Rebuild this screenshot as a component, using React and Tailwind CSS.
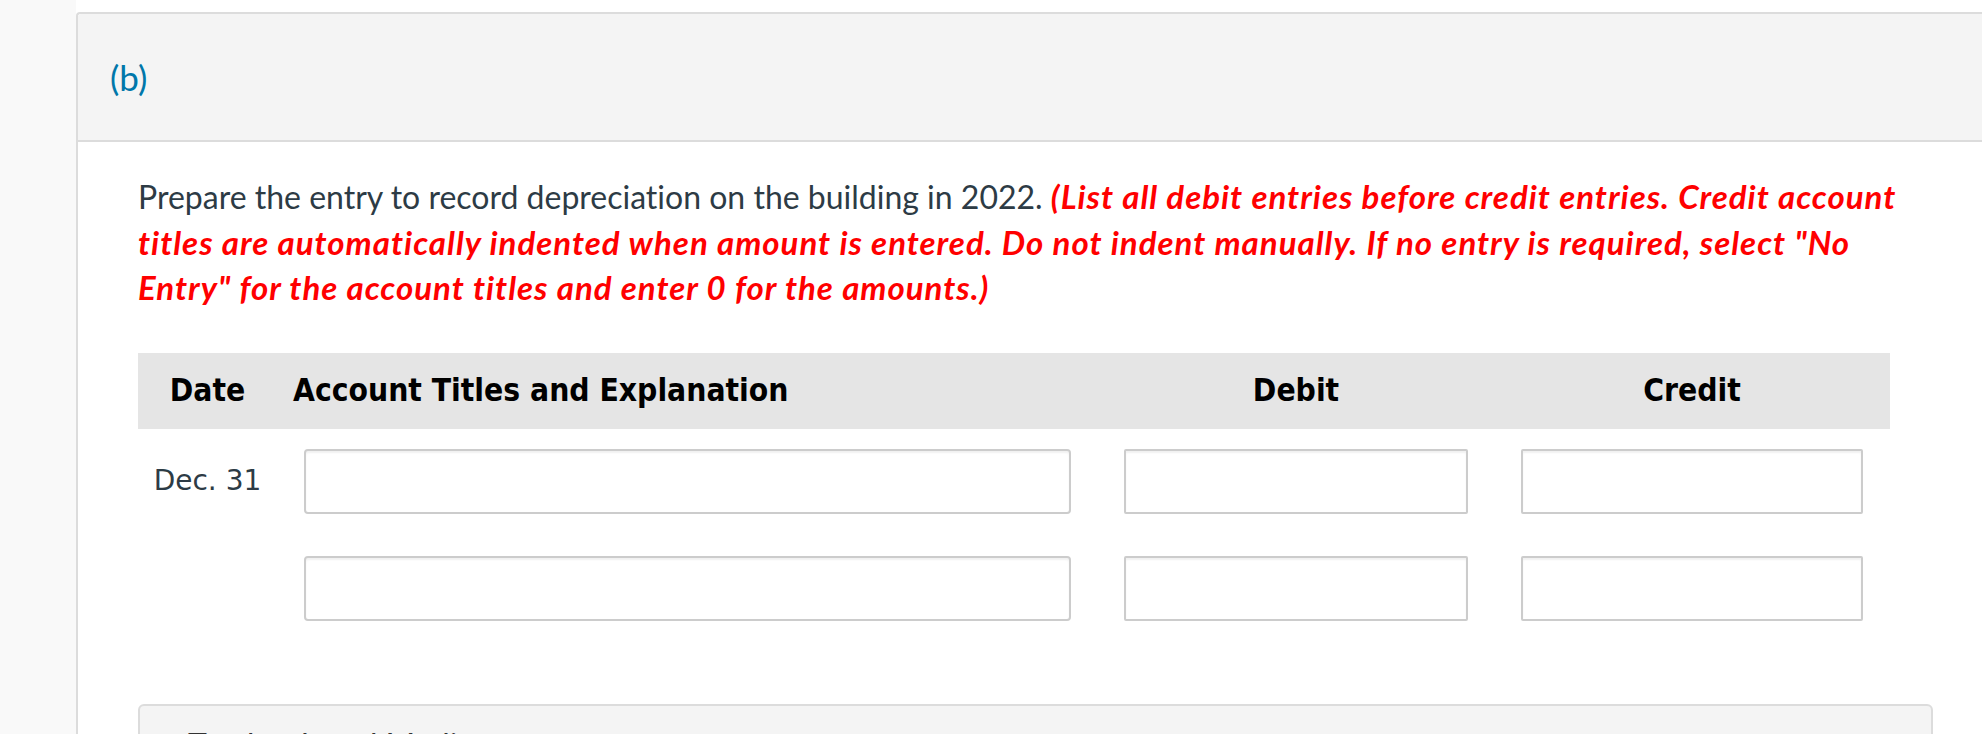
export default function App() {
  return (
    <div className="w-[1982px] h-[734px] overflow-hidden bg-white flex">
      <div className="w-[76px] shrink-0 bg-[#f9f9f9] self-stretch" />
      <div className="pt-[12px] shrink-0">
        <div className="w-[1918px] border-l-2 border-t-2 border-[#dcdcdc] rounded-tl-[4px] bg-white">
          <div className="h-[128px] bg-[#f4f4f4] border-b-2 border-[#dcdcdc] rounded-tl-[3px] flex items-center pl-[32px]">
            <span className="font-['Lato',sans-serif] text-[35px] leading-none text-[#0077aa]">(b)</span>
          </div>
          <div className="pl-[60px] pr-[61px] pt-[32px]">
            <p className="font-['Lato',sans-serif] text-[32px] leading-[44.5px] text-[#2d3b45] w-[1795px] [font-variant-ligatures:none]">
              Prepare the entry to record depreciation on the building in 2022.{" "}
              <span className="font-bold italic text-[#ff0000] text-[33px] tracking-[1px]">
                (List all debit entries before credit entries. Credit account titles are automatically indented when amount is entered. Do not indent manually. If no entry is required, select "No Entry" for the account titles and enter 0 for the amounts.)
              </span>
            </p>
            <div className="mt-[42px] w-[1752px]">
              <div className="grid grid-cols-[139px_821px_396px_396px] h-[76px] bg-[#e5e5e5] items-center font-['DejaVu_Sans_Condensed','DejaVu_Sans',sans-serif] [font-stretch:condensed] font-bold text-[31.5px] text-black">
                <div className="text-center">Date</div>
                <div className="pl-[16px]">Account Titles and Explanation</div>
                <div className="text-center">Debit</div>
                <div className="text-center">Credit</div>
              </div>
              <div className="flex flex-col gap-[42px] pt-[20px]">
                {["Dec. 31", ""].map((d, i) => (
                  <div key={i} className="grid grid-cols-[139px_821px_396px_396px] items-center">
                    <div className="text-center font-['DejaVu_Sans',sans-serif] text-[28px] text-[#2d3b45]">{d}</div>
                    <div className="px-[27px]">
                      <div className="h-[65px] border-2 border-[#cccccc] rounded-[4px] bg-white shadow-[inset_0_2px_2px_rgba(0,0,0,0.06)]" />
                    </div>
                    <div className="px-[26px]">
                      <div className="h-[65px] border-2 border-[#cccccc] rounded-[2px] bg-white shadow-[inset_0_2px_2px_rgba(0,0,0,0.06)]" />
                    </div>
                    <div className="px-[27px]">
                      <div className="h-[65px] border-2 border-[#cccccc] rounded-[2px] bg-white shadow-[inset_0_2px_2px_rgba(0,0,0,0.06)]" />
                    </div>
                  </div>
                ))}
              </div>
            </div>
            <div className="mt-[83px] w-[1795px] h-[80px] border-2 border-[#dcdcdc] rounded-[6px] bg-[#f4f4f4] pl-[48px] pt-[20px]">
              <span className="font-['Lato',sans-serif] text-[32px] leading-[1.2] text-[#333333]">Textbook and Media</span>
            </div>
          </div>
        </div>
      </div>
    </div>
  );
}
